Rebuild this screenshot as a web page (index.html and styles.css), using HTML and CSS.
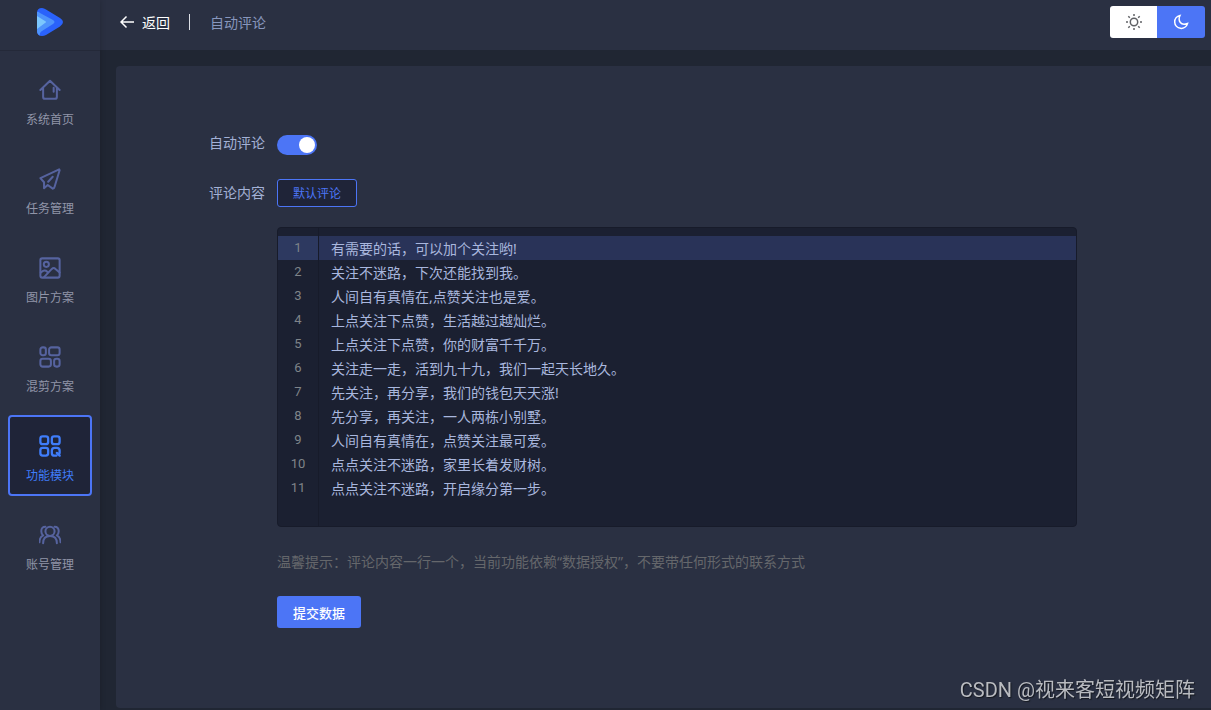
FILE: index.html
```html
<!DOCTYPE html>
<html lang="zh-CN">
<head>
    <meta charset="UTF-8">
    <title>自动评论</title>
    <link rel="stylesheet" href="styles.css">
</head>
<body>
    <aside class="sidebar">
        <div class="logo">
            <svg width="28" height="30" viewBox="0 0 28 30">
                <path d="M1 6Q1 1 6 1Q8 1 10 2.500L24 11Q27 13 27 15Q27 17.500 24 19.500L10 28Q8 29 6 29Q1 29 1 24Z" fill="#2a62fb"/>
                <path d="M1 5Q2 4 4 6L17 13Q20 15 17 17L6 24Q3 26 4 28.500Q1 27 1 24Z" fill="#4e93fb"/>
                <path d="M1 9L9 14Q11 15 9 16L1 22Z" fill="#7cc7fd"/>
            </svg>
        </div>
        <nav class="menu">
            <a href="#" class="menu-item">
                <svg class="icon" viewBox="0 0 24 24"><path d="M1.500 12L12 2l10.500 10M4.500 10v9.500a2 2 0 0 0 2 2h11a2 2 0 0 0 2-2V10M16 9.500v4.500"/></svg>
                <span>系统首页</span>
            </a>
            <a href="#" class="menu-item">
                <svg class="icon" viewBox="0 0 24 24"><path d="M22 1.500L1.500 11l4 4.500V22l4-3.500 5.500 4q1.500 0 2-2L22.500 2.500zM10 15l5-5.500"/></svg>
                <span>任务管理</span>
            </a>
            <a href="#" class="menu-item">
                <svg class="icon" viewBox="0 0 24 24"><rect x="1.500" y="1.500" width="21" height="21" rx="2"/><circle cx="8" cy="8" r="2.800"/><path d="M2 17q4-4 7-1M5.500 22l8.500-9q2-2 4 0l4.500 4"/></svg>
                <span>图片方案</span>
            </a>
            <a href="#" class="menu-item">
                <svg class="icon" viewBox="0 0 24 24"><rect x="1.500" y="1.500" width="6" height="8.500" rx="2.500"/><rect x="11" y="1.500" width="11.500" height="8.500" rx="2.500"/><rect x="1.500" y="14" width="11.500" height="8.500" rx="2.500"/><rect x="16.500" y="14" width="6" height="8.500" rx="2.500"/></svg>
                <span>混剪方案</span>
            </a>
            <a href="#" class="menu-item active">
                <svg class="icon" viewBox="0 0 24 24"><rect x="1.500" y="1.500" width="8.500" height="8.500" rx="2.500"/><rect x="14" y="1.500" width="8.500" height="8.500" rx="2.500"/><rect x="1.500" y="14" width="8.500" height="8.500" rx="2.500"/><path d="M19 22.500H17a3 3 0 0 1-3-3V17a3 3 0 0 1 3-3h2.500a3 3 0 0 1 3 3v2.500q0 1-1 1.800M19.500 19.500l3 3"/></svg>
                <span>功能模块</span>
            </a>
            <a href="#" class="menu-item">
                <svg class="icon" viewBox="0 0 24 24"><circle cx="12" cy="8" r="5"/><path d="M4.500 21q0-8 7.500-8t7.500 8M7 3Q2.500 3 2.500 8q0 3 2 4.500-4 2-4 7.500M17 3q4.500 0 4.500 5 0 3-2 4.500 4 2 4 7.500"/></svg>
                <span>账号管理</span>
            </a>
        </nav>
    </aside>

    <div class="page">
        <header class="header">
            <a href="#" class="back">
                <svg width="14" height="14" viewBox="0 0 14 14"><path d="M14 7H1.500M6.500 1.500L1 7l5.500 5.500"/></svg>
                <span>返回</span>
            </a>
            <span class="divider"></span>
            <span class="title">自动评论</span>
            <div class="theme">
                <button type="button" class="theme-btn light" aria-label="浅色">
                    <svg width="16" height="16" viewBox="0 0 16 16"><circle cx="8" cy="8" r="3.700"/><path d="M8 0v2M8 14v2M0 8h2M14 8h2M2.300 2.300l1.500 1.500M12.200 12.200l1.500 1.500M2.300 13.700l1.500-1.500M12.200 3.800l1.500-1.500"/></svg>
                </button>
                <button type="button" class="theme-btn dark" aria-label="深色">
                    <svg width="16" height="16" viewBox="0 0 16 16"><path d="M7 1.500A6.500 6.500 0 1 0 14.500 9.500Q9.500 11.500 7.300 8.500Q5 5.500 7 1.500z"/></svg>
                </button>
            </div>
        </header>

        <main class="card">
            <form class="form">
                <div class="row">
                    <label class="label" for="auto">自动评论</label>
                    <div class="content switch-box">
                        <input type="checkbox" id="auto" class="switch" checked>
                    </div>
                </div>
                <div class="row">
                    <label class="label" for="comments">评论内容</label>
                    <div class="content">
                        <button type="button" class="btn-plain">默认评论</button>
                    </div>
                </div>
                <div class="editor">
                    <ol class="gutter">
                        <li class="current">1</li>
                        <li>2</li>
                        <li>3</li>
                        <li>4</li>
                        <li>5</li>
                        <li>6</li>
                        <li>7</li>
                        <li>8</li>
                        <li>9</li>
                        <li>10</li>
                        <li>11</li>
                    </ol>
                    <textarea id="comments" class="lines" rows="11" spellcheck="false">有需要的话，可以加个关注哟!
关注不迷路，下次还能找到我。
人间自有真情在,点赞关注也是爱。
上点关注下点赞，生活越过越灿烂。
上点关注下点赞，你的财富千千万。
关注走一走，活到九十九，我们一起天长地久。
先关注，再分享，我们的钱包天天涨!
先分享，再关注，一人两栋小别墅。
人间自有真情在，点赞关注最可爱。
点点关注不迷路，家里长着发财树。
点点关注不迷路，开启缘分第一步。</textarea>
                </div>
                <p class="hint">温馨提示：评论内容一行一个，当前功能依赖“数据授权”，不要带任何形式的联系方式</p>
                <button type="submit" class="btn-primary">提交数据</button>
            </form>
        </main>
    </div>

    <div class="watermark">CSDN @视来客短视频矩阵</div>
</body>
</html>
```

FILE: styles.css
```css
* {
    box-sizing: border-box;
}
body {
    display: flex;
    min-height: 100vh;
    margin: 0;
    background: #202633;
    color: #a3b1d6;
    font-family: "Noto Sans", "Noto Sans CJK SC", sans-serif;
    font-size: 14px;
}
a {
    color: inherit;
    text-decoration: none;
}
button,
textarea {
    font-family: inherit;
}

/* sidebar */
.sidebar {
    flex: 0 0 100px;
    background: #2a3042;
    box-shadow: 0 0 6px rgba(0, 0, 0, 0.2);
    z-index: 1;
}
.logo {
    display: flex;
    justify-content: center;
    height: 51px;
    padding-top: 7px;
    border-bottom: 1px solid #242939;
}
.menu {
    display: flex;
    flex-direction: column;
    gap: 8px;
    padding: 8px;
}
.menu-item {
    display: flex;
    flex-direction: column;
    align-items: center;
    gap: 10px;
    height: 81px;
    padding-top: 18px;
    border: 2px solid transparent;
    border-radius: 4px;
    color: #9195a8;
    font-size: 12px;
    line-height: 18px;
}
.menu-item.active {
    border-color: #4c75f6;
    background: #1f2438;
    color: #3f7dfa;
}
.icon {
    width: 22px;
    height: 22px;
    fill: none;
    stroke: #56639f;
    stroke-width: 2.2;
    stroke-linecap: round;
    stroke-linejoin: round;
}
.active .icon {
    stroke: #3f7dfa;
    stroke-width: 2.5;
}

/* header */
.page {
    flex: 1;
    display: flex;
    flex-direction: column;
    min-width: 0;
}
.header {
    display: flex;
    align-items: center;
    height: 50px;
    padding: 0 6px 6px 20px;
    background: #2a3042;
}
.back {
    display: flex;
    align-items: center;
    gap: 8px;
    color: #fff;
}
.back svg {
    fill: none;
    stroke: #fff;
    stroke-width: 1.5;
}
.divider {
    width: 1px;
    height: 16px;
    margin: 0 20px 0 19px;
    background: #dcdfe6;
}
.title {
    color: #8796bd;
}
.theme {
    display: flex;
    margin-left: auto;
    border-radius: 3px;
    overflow: hidden;
}
.theme-btn {
    display: flex;
    align-items: center;
    justify-content: center;
    width: 48px;
    height: 32px;
    padding: 0;
    border: none;
}
.theme-btn svg {
    fill: none;
    stroke-width: 1.5;
}
.light {
    width: 47px;
    background: #fff;
}
.light svg {
    stroke: #606266;
}
.dark {
    background: #4c75f6;
}
.dark svg {
    stroke: #fff;
}

/* form */
.card {
    flex: 1;
    margin: 16px 0 2px 16px;
    padding: 61px 20px 60px 82px;
    border-radius: 4px 0 0 4px;
    background: #2a3042;
}
.form {
    display: flex;
    flex-direction: column;
    align-items: flex-start;
    gap: 18px;
}
.row {
    display: flex;
}
.label {
    width: 79px;
    padding-right: 12px;
    line-height: 32px;
    text-align: right;
}
.content {
    display: flex;
    align-items: center;
    height: 32px;
}
.switch-box {
    padding-top: 4px;
}
.switch {
    appearance: none;
    display: flex;
    justify-content: flex-end;
    width: 40px;
    height: 20px;
    margin: 0;
    padding: 2px;
    border-radius: 10px;
    background: #4c75f6;
}
.switch::before {
    content: "";
    width: 16px;
    height: 16px;
    border-radius: 50%;
    background: #fff;
}
.btn-plain {
    width: 80px;
    height: 28px;
    padding: 0;
    border: 1px solid #4c75f6;
    border-radius: 3px;
    background: #1f2438;
    color: #4c75f6;
    font-size: 12px;
}
.editor {
    display: flex;
    width: 100%;
    max-width: 800px;
    height: 300px;
    margin: 0 0 1px 79px;
    border: 1px solid #171b2a;
    border-radius: 4px;
    background: #1b2031;
}
.gutter {
    flex: 0 0 41px;
    margin: 0;
    padding: 8px 0 0;
    border-right: 1px solid #171b2a;
    color: #7f8489;
    font-family: Roboto, sans-serif;
    font-size: 13px;
    line-height: 24px;
    list-style: none;
    text-align: center;
}
.gutter .current {
    background: #2d3960;
}
.lines {
    flex: 1;
    padding: 9px 12px;
    border: none;
    outline: none;
    resize: none;
    /* active line */
    background: linear-gradient(#293358, #293358) 0 8px / 100% 24px no-repeat;
    color: #a9b7de;
    font-size: 14px;
    line-height: 24px;
}
.hint {
    margin: 0 0 0 79px;
    color: #65676b;
    line-height: 32px;
}
.btn-primary {
    width: 84px;
    height: 32px;
    margin-left: 79px;
    padding: 0;
    border: none;
    border-radius: 3px;
    background: #4c75f6;
    color: #fff;
    font-size: 13px;
    font-weight: 500;
}

.watermark {
    position: fixed;
    right: 16px;
    bottom: 5px;
    color: #b9bbc0;
    font-family: Roboto, "Noto Sans CJK SC", sans-serif;
    font-size: 20px;
    line-height: 30px;
    text-shadow: 1px 1px 1px #15181f;
}
```
